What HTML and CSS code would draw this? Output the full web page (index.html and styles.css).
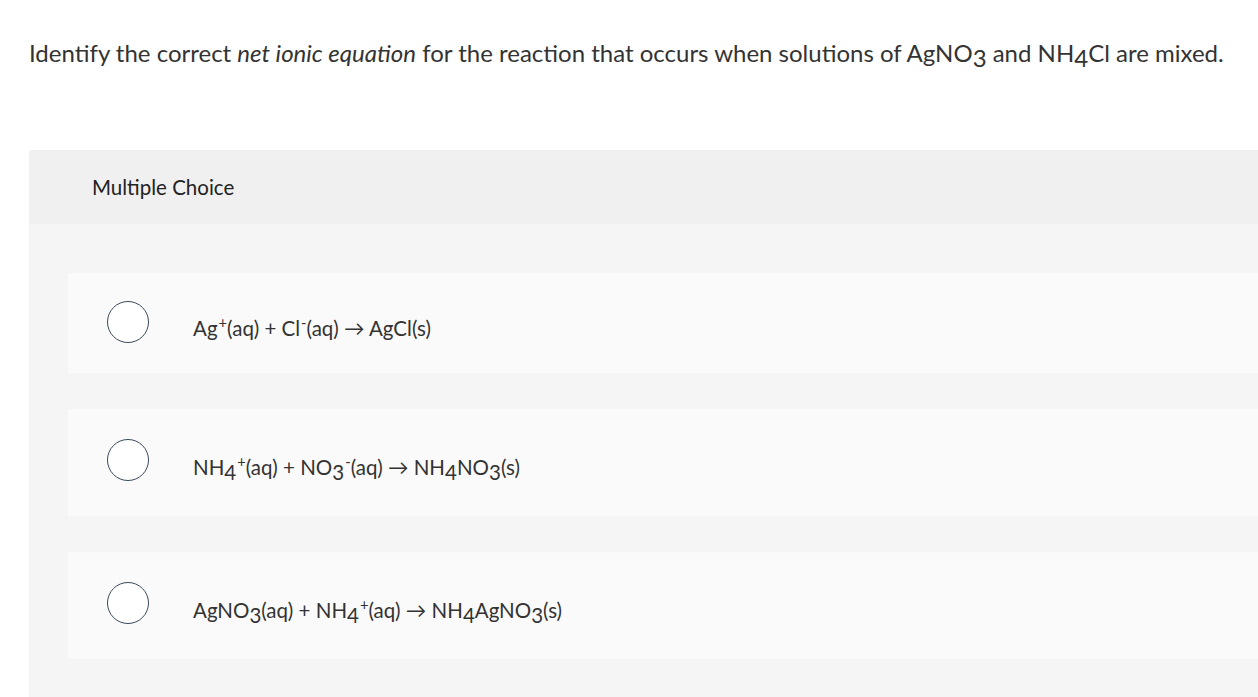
FILE: index.html
```html
<!DOCTYPE html>
<html>
<head>
<meta charset="utf-8">
<link rel="stylesheet" href="styles.css">
</head>
<body>
<p class="question">Identify the correct <em>net ionic equation</em> for the reaction that occurs when solutions of AgNO<sub>3</sub> and NH<sub>4</sub>Cl are mixed.</p>
<section class="panel">
  <header class="panel-head">Multiple Choice</header>
  <div class="panel-body">
    <div class="option">
      <span class="radio"></span>
      <span class="eq">Ag<sup>+</sup>(aq) + Cl<sup>-</sup>(aq) → AgCl(s)</span>
    </div>
    <div class="option tall">
      <span class="radio"></span>
      <span class="eq">NH<sub>4</sub><sup>+</sup>(aq) + NO<sub>3</sub><sup>-</sup>(aq) → NH<sub>4</sub>NO<sub>3</sub>(s)</span>
    </div>
    <div class="option tall">
      <span class="radio"></span>
      <span class="eq">AgNO<sub>3</sub>(aq) + NH<sub>4</sub><sup>+</sup>(aq) → NH<sub>4</sub>AgNO<sub>3</sub>(s)</span>
    </div>
  </div>
</section>
</body>
</html>
```
FILE: styles.css
```css
html, body {
  margin: 0;
  background: #ffffff;
  overflow: hidden;
}
body {
  font-family: Lato, "Open Sans", sans-serif;
  color: #333333;
  width: 1258px;
  height: 697px;
}
.question {
  margin: 0;
  padding: 38px 0 0 29px;
  font-size: 24px;
  line-height: 30px;
  height: 110px;
  box-sizing: border-box;
  white-space: nowrap;
}
.question em { font-style: italic; }
.question sub {
  font-size: 1em;
  vertical-align: -5px;
  line-height: 0;
}
.panel {
  margin-left: 29px;
  margin-top: 40px;
  width: 1300px;
  border-radius: 4px 0 0 0;
  background: #f5f5f5;
  overflow: hidden;
}
.panel-head {
  background: #f0f0f0;
  height: 74px;
  display: flex;
  align-items: center;
  padding-left: 63px;
  font-size: 20.5px;
  color: #222;
}
.panel-body {
  padding: 49px 0 40px 39px;
  display: flex;
  flex-direction: column;
  gap: 36px;
}
.option {
  background: #fafafa;
  min-height: 100px;
  display: flex;
  align-items: flex-start;
  padding-left: 39px;
  box-sizing: border-box;
}
.option.tall { min-height: 107px; }
.radio {
  width: 40px;
  height: 40px;
  border: 1.3px solid #3a4a5c;
  border-radius: 50%;
  background: #fff;
  margin-top: 28px;
  flex: none;
}
.option.tall .radio { margin-top: 30px; }
.eq {
  margin-left: 44px;
  margin-top: 43px;
  font-size: 20.5px;
  line-height: 24px;
  color: #333;
}
.option.tall .eq { margin-top: 46px; }
.eq sub {
  font-size: 1em;
  vertical-align: -5px;
  line-height: 0;
}
.eq sup {
  font-size: 0.72em;
  vertical-align: 8px;
  line-height: 0;
  padding-left: 1px;
}
```
